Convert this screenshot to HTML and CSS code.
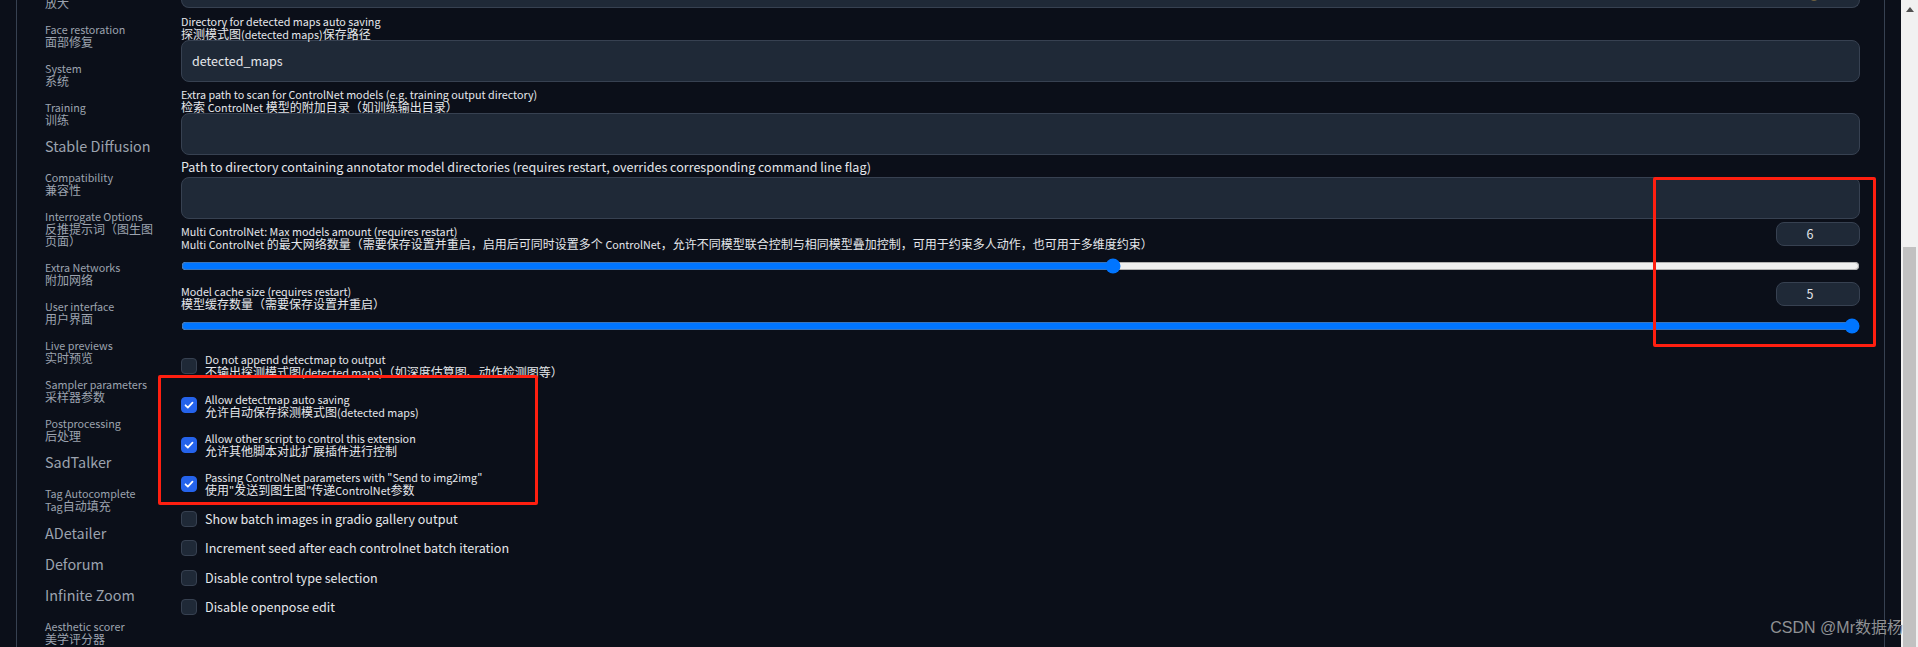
FILE: index.html
```html
<!DOCTYPE html>
<html lang="zh">
<head>
<meta charset="utf-8">
<title>Settings</title>
<link rel="stylesheet" href="styles.css">
</head>
<body>
<div class="window">
  <div class="page">
    <nav class="sidebar">
      <a class="item"><span class="en">Upscaling</span><span>放大</span></a>
      <a class="item"><span class="en">Face restoration</span><span>面部修复</span></a>
      <a class="item"><span class="en">System</span><span>系统</span></a>
      <a class="item"><span class="en">Training</span><span>训练</span></a>
      <a class="heading">Stable Diffusion</a>
      <a class="item"><span class="en">Compatibility</span><span>兼容性</span></a>
      <a class="item"><span class="en">Interrogate Options</span><span>反推提示词（图生图页面）</span></a>
      <a class="item"><span class="en">Extra Networks</span><span>附加网络</span></a>
      <a class="item"><span class="en">User interface</span><span>用户界面</span></a>
      <a class="item"><span class="en">Live previews</span><span>实时预览</span></a>
      <a class="item"><span class="en">Sampler parameters</span><span>采样器参数</span></a>
      <a class="item"><span class="en">Postprocessing</span><span>后处理</span></a>
      <a class="heading">SadTalker</a>
      <a class="item"><span class="en">Tag Autocomplete</span><span><span class="en">Tag</span>自动填充</span></a>
      <a class="heading">ADetailer</a>
      <a class="heading">Deforum</a>
      <a class="heading">Infinite Zoom</a>
      <a class="item"><span class="en">Aesthetic scorer</span><span>美学评分器</span></a>
    </nav>
    <main class="content">
      <div class="field-top"><div class="input"><i class="input-dot"></i></div></div>
      <div class="field">
        <label class="label"><span class="en">Directory for detected maps auto saving</span><span>探测模式图<span class="en">(detected maps)</span>保存路径</span></label>
        <div class="input">detected_maps</div>
      </div>
      <div class="field field-next">
        <label class="label"><span class="en">Extra path to scan for ControlNet models (e.g. training output directory)</span><span>检索 <span class="en">ControlNet</span> 模型的附加目录（如训练输出目录）</span></label>
        <div class="input"></div>
      </div>
      <div class="field field-plain">
        <label class="label-plain">Path to directory containing annotator model directories (requires restart, overrides corresponding command line flag)</label>
        <div class="input"></div>
      </div>
      <div class="slider-field">
        <div class="slider-head">
          <label class="label"><span class="en">Multi ControlNet: Max models amount (requires restart)</span><span><span class="en">Multi ControlNet</span> 的最大网络数量（需要保存设置并重启，启用后可同时设置多个 <span class="en">ControlNet</span>，允许不同模型联合控制与相同模型叠加控制，可用于约束多人动作，也可用于多维度约束）</span></label>
          <div class="number">6</div>
        </div>
        <input class="range" type="range" min="1" max="10" value="6">
      </div>
      <div class="slider-field">
        <div class="slider-head">
          <label class="label"><span class="en">Model cache size (requires restart)</span><span>模型缓存数量（需要保存设置并重启）</span></label>
          <div class="number">5</div>
        </div>
        <input class="range" type="range" min="1" max="5" value="5">
      </div>
      <div class="checks">
        <div class="check two"><i class="box"></i><label class="label"><span class="en">Do not append detectmap to output</span><span>不输出探测模式图<span class="en">(detected maps)</span>（如深度估算图、动作检测图等）</span></label></div>
        <div class="check two"><i class="box on"><svg viewBox="0 0 16 16"><path d="M4 8.3l2.7 2.7L12 5.4" fill="none" stroke="#fff" stroke-width="2" stroke-linecap="round" stroke-linejoin="round"/></svg></i><label class="label"><span class="en">Allow detectmap auto saving</span><span>允许自动保存探测模式图<span class="en">(detected maps)</span></span></label></div>
        <div class="check two"><i class="box on"><svg viewBox="0 0 16 16"><path d="M4 8.3l2.7 2.7L12 5.4" fill="none" stroke="#fff" stroke-width="2" stroke-linecap="round" stroke-linejoin="round"/></svg></i><label class="label"><span class="en">Allow other script to control this extension</span><span>允许其他脚本对此扩展插件进行控制</span></label></div>
        <div class="check two"><i class="box on"><svg viewBox="0 0 16 16"><path d="M4 8.3l2.7 2.7L12 5.4" fill="none" stroke="#fff" stroke-width="2" stroke-linecap="round" stroke-linejoin="round"/></svg></i><label class="label"><span class="en">Passing ControlNet parameters with "Send to img2img"</span><span>使用<span class="en">"</span>发送到图生图<span class="en">"</span>传递<span class="en">ControlNet</span>参数</span></label></div>
        <div class="check"><i class="box"></i><label class="label-single">Show batch images in gradio gallery output</label></div>
        <div class="check"><i class="box"></i><label class="label-single">Increment seed after each controlnet batch iteration</label></div>
        <div class="check"><i class="box"></i><label class="label-single">Disable control type selection</label></div>
        <div class="check"><i class="box"></i><label class="label-single">Disable openpose edit</label></div>
      </div>
    </main>
  </div>
  <div class="scrollbar">
    <svg class="arrow" viewBox="0 0 8 5"><path d="M4 0L8 5H0z" fill="#505050"/></svg>
    <div class="thumb"></div>
  </div>
  <div class="mark mark-numbers"></div>
  <div class="mark mark-checks"></div>
  <div class="watermark">CSDN @Mr数据杨</div>
</div>
</body>
</html>
```
FILE: styles.css
```css
* { box-sizing: border-box; }
html, body { margin: 0; height: 100%; overflow: hidden; }
body {
  background: #0b0f19;
  color: #e5e7eb;
  font-family: "Noto Sans CJK SC", "Noto Sans", sans-serif;
}
.window {
  position: relative;
  display: flex;
  height: 647px;
  overflow: hidden;
}
.page {
  flex: 1;
  display: flex;
  margin: -16px 16px 0 16px;
  padding-right: 24px;
  border-left: 1px solid #374151;
  border-right: 1px solid #374151;
  min-width: 0;
}
.sidebar {
  width: 164px;
  flex: none;
  padding-left: 28px;
  padding-right: 22px;
  padding-top: 1px;
  display: flex;
  flex-direction: column;
  gap: 15px;
  color: #9ca3af;
}
.item {
  display: flex;
  flex-direction: column;
  font-size: 12px;
  line-height: 12px;
  white-space: normal;
}
.en { font-size: 10.75px; }
.item .en { white-space: nowrap; }
.heading {
  font-size: 14.4px;
  line-height: 9px;
  height: 16px;
  white-space: nowrap;
}
.content {
  flex: 1;
  min-width: 0;
}
.input {
  height: 42px;
  background: #1f2937;
  border: 1px solid #374151;
  border-radius: 8px;
  font-size: 12.5px;
  line-height: 40px;
  padding: 0 10px;
  color: #e5e7eb;
}
.field-top { height: 24px; }
.field-top .input {
  height: 24px;
  border-top: 0;
  border-radius: 0 0 8px 8px;
  position: relative;
  overflow: hidden;
}
.input-dot {
  position: absolute;
  right: 40px;
  bottom: 6px;
  width: 10px;
  height: 10px;
  border-radius: 50%;
  background: #6f6242;
}
.field { margin-top: 8px; }
.field-next { margin-top: 7px; }
.field-plain { margin-top: 4px; }
.label {
  display: flex;
  flex-direction: column;
  font-size: 12px;
  line-height: 12px;
  color: #e5e7eb;
  white-space: nowrap;
}
.field .label { height: 24px; }
.label-plain {
  display: block;
  font-size: 12.55px;
  line-height: 16px;
  height: 16px;
  margin-bottom: 2px;
}
.slider-head {
  display: flex;
  justify-content: space-between;
  align-items: flex-start;
  height: 39px;
}
.slider-head .label { padding-top: 7px; }
.number {
  width: 84px;
  height: 24px;
  flex: none;
  margin-top: 3px;
  background: #1f2937;
  border: 1px solid #374151;
  border-radius: 8px;
  font-size: 12.5px;
  line-height: 22px;
  padding-right: 16px;
  text-align: center;
}
.range {
  display: block;
  width: 100%;
  height: 16px;
  margin: 0;
}
.slider-field + .slider-field { margin-top: 5px; }
.checks {
  display: flex;
  flex-direction: column;
  gap: 15px;
  margin-top: 20px;
}
.check {
  display: flex;
  align-items: center;
  gap: 8px;
  height: 14.5px;
}
.check.two { height: 24.33px; }
.check.two .label { padding-top: 1px; }
.box {
  flex: none;
  width: 16px;
  height: 16px;
  border: 1px solid #374151;
  border-radius: 4px;
  background: #1f2937;
  display: block;
}
.box.on { background: #2563eb; border-color: #2563eb; }
.box svg { display: block; width: 14px; height: 14px; }
.label-single { font-size: 12.55px; line-height: 14px; color: #e5e7eb; }
.scrollbar {
  flex: none;
  width: 17px;
  background: #f1f1f1;
  display: flex;
  flex-direction: column;
  align-items: center;
}
.arrow { width: 8px; height: 5px; margin-top: 7px; }
.thumb {
  margin-top: 235px;
  width: 13px;
  flex: 1;
  background: #c1c1c1;
}
.mark {
  position: absolute;
  border: 3px solid #ff1f10;
  border-radius: 2px;
}
.mark-numbers { left: 1653px; top: 177px; width: 223px; height: 170px; }
.mark-checks { left: 158px; top: 375px; width: 380px; height: 130px; }
.watermark {
  position: absolute;
  right: 15px;
  top: 617px;
  font-family: "Liberation Sans", "Noto Sans CJK SC", sans-serif;
  font-size: 16px;
  line-height: 22px;
  color: #8f9194;
  white-space: nowrap;
}
```
